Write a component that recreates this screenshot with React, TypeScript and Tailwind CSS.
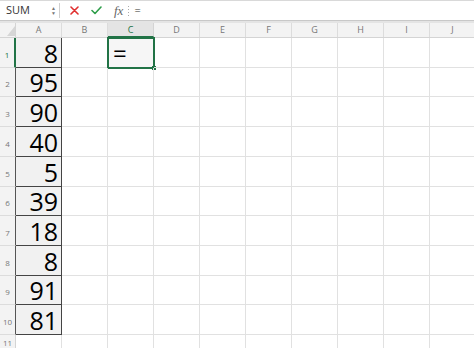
const cols = ['A', 'B', 'C', 'D', 'E', 'F', 'G', 'H', 'I', 'J']
const values = [8, 95, 90, 40, 5, 39, 18, 8, 91, 81]
const tall = [true, false, true, true, true, false, true, true, false, true]

const Toolbar = () => {
  return (
    <div className="flex h-[21px] items-center bg-white border-t border-[#d9d9d9] border-b border-b-[#c8c8c8]">
      <div className="flex w-[59px] items-center justify-between pl-[6px] pr-[3px] h-full">
        <span className="text-[11px] text-[#333] font-['Open_Sans',sans-serif]">SUM</span>
        <span className="flex flex-col items-center leading-none text-[#777]">
          <span className="text-[5px]">▲</span>
          <span className="text-[5px]">▼</span>
        </span>
      </div>
      <div className="w-px h-[15px] bg-[#d0d0d0]" />
      <div className="flex items-center h-full">
        <svg className="ml-[10px]" width="9" height="9" viewBox="0 0 9 9">
          <path d="M1 1 L8 8 M8 1 L1 8" stroke="#e03030" strokeWidth="1.6" strokeLinecap="round" />
        </svg>
        <svg className="ml-[12px]" width="11" height="9" viewBox="0 0 11 9">
          <path d="M1 4.5 L4 7.5 L10 1" stroke="#2e9e4a" strokeWidth="1.6" fill="none" strokeLinecap="round" strokeLinejoin="round" />
        </svg>
        <span className="ml-[12px] text-[13px] italic text-[#666] font-['Liberation_Serif',serif]">fx</span>
        <span className="ml-[5px] flex flex-col gap-[2px]">
          <span className="w-px h-px bg-[#aaa]" />
          <span className="w-px h-px bg-[#aaa]" />
          <span className="w-px h-px bg-[#aaa]" />
          <span className="w-px h-px bg-[#aaa]" />
        </span>
        <span className="ml-[5px] text-[11px] text-[#333] font-['Open_Sans',sans-serif]">=</span>
      </div>
    </div>
  )
}

const HeaderRow = () => {
  return (
    <div className="flex h-[15px] bg-[#f3f3f3] border-b border-[#d4d4d4]">
      <div className="relative w-[16px] shrink-0 border-r border-[#d4d4d4]">
        <svg className="absolute left-[7px] top-[3px]" width="8" height="10" viewBox="0 0 8 10">
          <path d="M8 0 L8 10 L0 10 Z" fill="#d6d6d6" />
        </svg>
      </div>
      {cols.map((c) => (
        <div
          key={c}
          className={
            c === 'C'
              ? 'flex w-[46px] shrink-0 items-center justify-center border-r border-[#d4d4d4] bg-[#e4e4e4] border-b border-b-[#217346] text-[9px] text-[#217346] font-["Open_Sans",sans-serif]'
              : 'flex w-[46px] shrink-0 items-center justify-center border-r border-[#dcdcdc] text-[9px] text-[#777] font-["Open_Sans",sans-serif]'
          }
        >
          {c}
        </div>
      ))}
    </div>
  )
}

const Row = ({ n, value, big }: { n: number; value?: number; big: boolean }) => {
  const height = big ? 'h-[30px]' : 'h-[29px]'
  return (
    <div className={`flex ${height} shrink-0`}>
      <div
        className={
          n === 1
            ? 'flex w-[16px] shrink-0 items-end justify-center pb-[6px] bg-[#f3f3f3] border-r-2 border-[#217346] border-b border-b-[#dcdcdc] text-[8px] text-[#217346] font-["Open_Sans",sans-serif]'
            : 'flex w-[16px] shrink-0 items-end justify-center pb-[6px] bg-[#f3f3f3] border-r border-[#555] border-b border-b-[#dcdcdc] text-[8px] text-[#777] font-["Open_Sans",sans-serif]'
        }
      >
        {n}
      </div>
      <div className="flex w-[46px] shrink-0 items-end justify-end pr-[3px] pb-[1px] bg-[#f1f1f1] border-r border-b border-[#444]">
        <div className="text-[25px] leading-[25px] text-black font-['Open_Sans',sans-serif]">{value}</div>
      </div>
      {cols.slice(1).map((c) => (
        <div key={c} className="relative w-[46px] shrink-0 border-r border-b border-[#e1e1e1]">
          {n === 1 && c === 'C' && (
            <div className="absolute -left-px -top-px w-[48px] h-[32px] flex items-center pl-[4px] bg-[#f6f6f6] border-2 border-[#217346]">
              <div className="text-[24px] leading-[24px] text-black font-['Open_Sans',sans-serif]">=</div>
              <span className="absolute -right-[3px] -bottom-[3px] w-[4px] h-[4px] bg-[#217346]" />
            </div>
          )}
        </div>
      ))}
    </div>
  )
}

const LastRow = () => {
  return (
    <div className="flex h-[20px] shrink-0">
      <div className="flex w-[16px] shrink-0 items-start justify-center pt-[2px] bg-[#f3f3f3] border-r border-[#d4d4d4] text-[8px] text-[#777] font-['Open_Sans',sans-serif]">
        11
      </div>
      {cols.map((c) => (
        <div key={c} className="w-[46px] shrink-0 border-r border-[#e1e1e1]" />
      ))}
    </div>
  )
}

export default function App() {
  return (
    <div className="w-[474px] h-[348px] overflow-hidden bg-white">
      <Toolbar />
      <div className="h-[2px] bg-[#e4e4e4]" />
      <HeaderRow />
      {values.map((v, i) => (
        <Row key={i} n={i + 1} value={v} big={tall[i]} />
      ))}
      <LastRow />
    </div>
  )
}
